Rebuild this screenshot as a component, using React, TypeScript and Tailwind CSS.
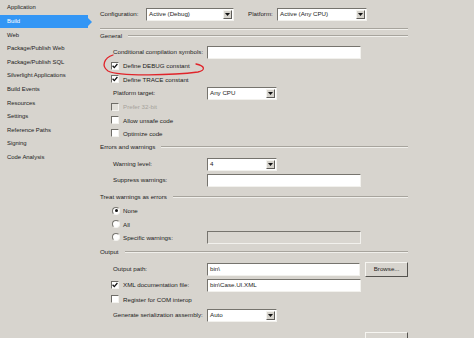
import type { ReactNode } from "react";

const sideItems = [
  "Application",
  "Build",
  "Web",
  "Package/Publish Web",
  "Package/Publish SQL",
  "Silverlight Applications",
  "Build Events",
  "Resources",
  "Settings",
  "Reference Paths",
  "Signing",
  "Code Analysis",
];

function Check({ checked, disabled }: { checked?: boolean; disabled?: boolean }) {
  return (
    <div
      className={`flex h-[8px] w-[8px] shrink-0 items-center justify-center border border-t-[#6e6c67] border-l-[#6e6c67] border-r-[#f4f3ef] border-b-[#f4f3ef] ${
        disabled ? "bg-[#e2e0da]" : "bg-white"
      }`}
    >
      {checked ? (
        <svg width="6" height="6" viewBox="0 0 6 6">
          <path d="M0.6 2.8 L2.3 4.6 L5.4 1" stroke="#111" strokeWidth="1.3" fill="none" />
        </svg>
      ) : null}
    </div>
  );
}

function Radio({ checked }: { checked?: boolean }) {
  return (
    <div className="flex h-[8px] w-[8px] shrink-0 items-center justify-center rounded-full border border-t-[#77756f] border-l-[#77756f] border-r-[#f4f3ef] border-b-[#f4f3ef] bg-white">
      {checked ? <div className="h-[3px] w-[3px] rounded-full bg-[#111]" /> : null}
    </div>
  );
}

function Select({ value, width }: { value: string; width: string }) {
  return (
    <div className={`flex h-[13px] items-center border border-t-[#76746e] border-l-[#76746e] border-r-[#f2f1ed] border-b-[#f2f1ed] bg-white ${width}`}>
      <span className="flex-1 truncate pl-[2px]">{value}</span>
      <div className="mr-[1px] flex h-[9px] w-[9px] items-center justify-center border border-t-[#f4f3ef] border-l-[#f4f3ef] border-r-[#5e5c58] border-b-[#5e5c58] bg-[#d6d3cc]">
        <svg width="5" height="3" viewBox="0 0 5 3">
          <path d="M0 0 H5 L2.5 3 Z" fill="#111" />
        </svg>
      </div>
    </div>
  );
}

function TextBox({ value, disabled }: { value?: string; disabled?: boolean }) {
  return (
    <div
      className={`flex h-[13px] w-[154px] items-center border border-t-[#76746e] border-l-[#76746e] border-r-[#f2f1ed] border-b-[#f2f1ed] pl-[2px] ${
        disabled ? "bg-[#d9d6d0]" : "bg-white"
      }`}
    >
      {value}
    </div>
  );
}

function Group({ title, className }: { title: string; className: string }) {
  return (
    <div className={`flex items-center gap-[6px] ${className}`}>
      <span>{title}</span>
      <div className="h-[2px] flex-1 border-t border-b border-t-[#a7a49d] border-b-[#f0efeb]" />
    </div>
  );
}

function Row({ label, h, mt = "", children }: { label: ReactNode; h: string; mt?: string; children?: ReactNode }) {
  return (
    <div className={`flex items-center pl-[13px] ${h} ${mt}`}>
      <div className="w-[94px] shrink-0">{label}</div>
      {children}
    </div>
  );
}

function CheckRow({ label, h, checked, disabled, children }: { label: string; h: string; checked?: boolean; disabled?: boolean; children?: ReactNode }) {
  return (
    <div className={`flex items-center pl-[11px] ${h}`}>
      <div className="flex w-[96px] shrink-0 items-center gap-[4px]">
        <Check checked={checked} disabled={disabled} />
        <span className={disabled ? "text-[#a6a39c]" : ""}>{label}</span>
      </div>
      {children}
    </div>
  );
}

function RadioRow({ label, h, checked, children }: { label: string; h: string; checked?: boolean; children?: ReactNode }) {
  return (
    <div className={`flex items-center pl-[12px] ${h}`}>
      <div className="flex w-[95px] shrink-0 items-center gap-[3px]">
        <Radio checked={checked} />
        <span>{label}</span>
      </div>
      {children}
    </div>
  );
}

export default function App() {
  return (
    <div
      className="relative flex h-[338px] w-[474px] overflow-hidden bg-[#d7d4ce] text-[6.2px] text-[#1c1c1c]"
      style={{ fontFamily: '"Liberation Sans", Arial, sans-serif' }}
    >
      <div className="w-[90px] shrink-0 pt-[1px] text-[5.9px]">
        {sideItems.map((item) => (
          <div
            key={item}
            className={`relative flex h-[13.6px] items-center pl-[7px] ${
              item === "Build" ? "w-[88px] bg-[#3396f5] text-white" : ""
            }`}
          >
            {item}
            {item === "Build" ? (
              <div className="absolute right-[-4px] top-[3px] h-0 w-0 border-y-[4px] border-l-[4px] border-y-transparent border-l-[#3396f5]" />
            ) : null}
          </div>
        ))}
      </div>

      <div className="flex w-[318px] flex-col pl-[10px] pt-[6px] *:shrink-0">
        <div className="flex h-[16px] items-center">
          <span className="w-[46px]">Configuration:</span>
          <Select value="Active (Debug)" width="w-[88px]" />
          <span className="ml-[14px] w-[29px]">Platform:</span>
          <Select value="Active (Any CPU)" width="w-[90px]" />
        </div>
        <div className="mt-[6px] h-[2px] border-t border-b border-t-[#a7a49d] border-b-[#f0efeb]" />

        <Group title="General" className="h-[11px]" />
        <Row label="Conditional compilation symbols:" h="h-[14px]" mt="mt-[4px]">
          <TextBox />
        </Row>
        <CheckRow label="Define DEBUG constant" h="h-[14px]" checked />
        <CheckRow label="Define TRACE constant" h="h-[13px]" checked />
        <Row label="Platform target:" h="h-[14px]">
          <Select value="Any CPU" width="w-[70px]" />
        </Row>
        <CheckRow label="Prefer 32-bit" h="h-[14px]" disabled />
        <CheckRow label="Allow unsafe code" h="h-[13px]" />
        <CheckRow label="Optimize code" h="h-[13px]" />

        <Group title="Errors and warnings" className="h-[14px]" />
        <Row label="Warning level:" h="h-[16px]" mt="mt-[2px]">
          <Select value="4" width="w-[70px]" />
        </Row>
        <Row label="Suppress warnings:" h="h-[16px]">
          <TextBox />
        </Row>

        <Group title="Treat warnings as errors" className="mt-[2px] h-[14px]" />
        <RadioRow label="None" h="h-[14px]" checked />
        <RadioRow label="All" h="h-[13px]" />
        <RadioRow label="Specific warnings:" h="h-[13px]">
          <TextBox disabled />
        </RadioRow>

        <Group title="Output" className="mt-[1px] h-[14px]" />
        <Row label="Output path:" h="h-[16px]" mt="mt-[2px]">
          <TextBox value="bin\" />
          <button className="ml-[5px] flex h-[15px] w-[43px] items-center justify-center border border-t-[#f6f5f1] border-l-[#f6f5f1] border-r-[#55534f] border-b-[#55534f] bg-[#d7d4ce] text-[6.2px]">
            Browse...
          </button>
        </Row>
        <CheckRow label="XML documentation file:" h="h-[16px]" checked>
          <TextBox value="bin\Case.UI.XML" />
        </CheckRow>
        <CheckRow label="Register for COM interop" h="h-[13px]" />
        <Row label="Generate serialization assembly:" h="h-[16px]" mt="mt-[1px]">
          <Select value="Auto" width="w-[70px]" />
        </Row>
        <div className="mt-[9px] flex justify-end">
          <div className="h-[15px] w-[43px] border border-t-[#f6f5f1] border-l-[#f6f5f1] border-r-[#55534f] border-b-[#55534f]" />
        </div>
      </div>

      <svg className="pointer-events-none absolute left-0 top-0" width="474" height="338" viewBox="0 0 474 338">
        <path
          d="M113 55 C104 58 101 66 108 71 C120 77 175 75 198 72 C206 70 205 66 196 64"
          stroke="#e0242a"
          strokeWidth="1.3"
          fill="none"
          strokeLinecap="round"
        />
      </svg>
    </div>
  );
}
